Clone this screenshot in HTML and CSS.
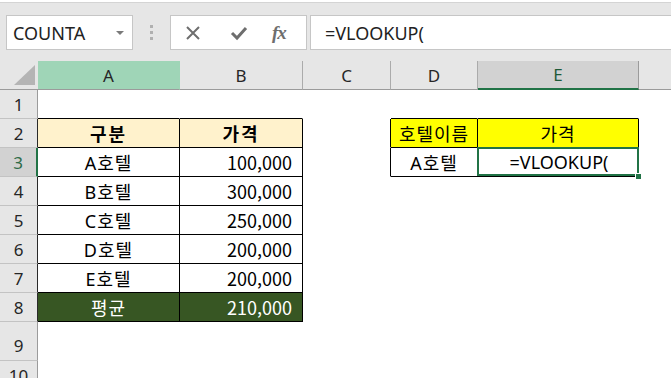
FILE: index.html
```html
<!DOCTYPE html>
<html lang="ko">
<head>
<meta charset="utf-8">
<link rel="stylesheet" href="styles.css">
</head>
<body>
<div class="app">
  <div class="toolbar">
    <div class="namebox">
      <span class="name">COUNTA</span>
      <svg class="caret" width="8" height="4" viewBox="0 0 8 4"><path d="M0 0H8L4 4Z" fill="#7a7a7a"/></svg>
    </div>
    <div class="dots"><i></i><i></i><i></i></div>
    <div class="btns">
      <svg class="ico" width="16" height="16" viewBox="0 0 16 16"><path d="M2 2L14 14M14 2L2 14" stroke="#6e6e6e" stroke-width="2" fill="none"/></svg>
      <svg class="ico" width="18" height="16" viewBox="0 0 18 16"><path d="M2 8L7 13L16 3" stroke="#6e6e6e" stroke-width="3" fill="none"/></svg>
      <span class="fx">fx</span>
    </div>
    <div class="formula">=VLOOKUP(</div>
  </div>

  <div class="sheet">
    <div class="corner"><span class="tri"></span></div>
    <div class="ch cha">A</div>
    <div class="ch">B</div>
    <div class="ch">C</div>
    <div class="ch">D</div>
    <div class="ch che">E</div>
    <div class="ch chf"></div>

    <div class="rh">1</div>
    <div class="c bb"></div><div class="c bb"></div><div class="c"></div><div class="c bb"></div><div class="c bb"></div><div class="c"></div>

    <div class="rh rt">2</div>
    <div class="c t hd bold">구분</div><div class="c t hd bold">가격</div><div class="c br"></div><div class="c t yl">호텔이름</div><div class="c t yl">가격</div><div class="c"></div>

    <div class="rh rsel">3</div>
    <div class="c t">A호텔</div><div class="c t num">100,000</div><div class="c br"></div><div class="c t">A호텔</div><div class="c t sel">=VLOOKUP(<span class="selbox"></span><span class="handle"></span></div><div class="c"></div>

    <div class="rh rt">4</div>
    <div class="c t">B호텔</div><div class="c t num">300,000</div><div class="c"></div><div class="c"></div><div class="c"></div><div class="c"></div>

    <div class="rh rt">5</div>
    <div class="c t">C호텔</div><div class="c t num">250,000</div><div class="c"></div><div class="c"></div><div class="c"></div><div class="c"></div>

    <div class="rh rt">6</div>
    <div class="c t">D호텔</div><div class="c t num">200,000</div><div class="c"></div><div class="c"></div><div class="c"></div><div class="c"></div>

    <div class="rh rt">7</div>
    <div class="c t">E호텔</div><div class="c t num">200,000</div><div class="c"></div><div class="c"></div><div class="c"></div><div class="c"></div>

    <div class="rh rt">8</div>
    <div class="c t dk">평균</div><div class="c t dk num">210,000</div><div class="c"></div><div class="c"></div><div class="c"></div><div class="c"></div>

    <div class="rh r9">9</div>
    <div class="c"></div><div class="c"></div><div class="c"></div><div class="c"></div><div class="c"></div><div class="c"></div>

    <div class="rh">10</div>
    <div class="c"></div><div class="c"></div><div class="c"></div><div class="c"></div><div class="c"></div><div class="c"></div>
  </div>
</div>
</body>
</html>
```

FILE: styles.css
```css
* { box-sizing: border-box; }
html, body { margin: 0; padding: 0; }
body {
  width: 671px;
  height: 378px;
  overflow: hidden;
  background: #ffffff;
  font-family: "Noto Sans", "Liberation Sans", sans-serif;
}
.app { width: 671px; height: 378px; overflow: hidden; }

.toolbar {
  height: 62px;
  background: #e6e6e6;
  border-top: 1px solid #d4d4d4;
  margin-top: 2px;
  display: flex;
  align-items: flex-start;
  padding: 12px 0 0 6px;
  margin-bottom: -3px;
}
.namebox {
  width: 127px;
  height: 35px;
  background: #fff;
  border: 1px solid #c6c6c6;
  display: flex;
  align-items: center;
  padding-left: 6px;
  padding-right: 8px;
  justify-content: space-between;
}
.name { font-size: 18px; color: #222; }
.caret { margin-top: 1px; }
.dots {
  margin-left: 17px;
  width: 3px;
  height: 35px;
  display: flex;
  flex-direction: column;
  justify-content: center;
  gap: 3px;
}
.dots i { display: block; width: 3px; height: 3px; background: #b0b0b0; }
.btns {
  margin-left: 17px;
  width: 137px;
  height: 35px;
  background: #fff;
  border: 1px solid #c6c6c6;
  display: flex;
  align-items: center;
  padding-left: 14px;
}
.btns .ico:first-child { margin-right: 29px; }
.btns .ico:nth-child(2) { margin-right: 24px; }
.fx {
  font-family: "Liberation Serif", "DejaVu Serif", serif;
  font-style: italic;
  font-weight: 700;
  font-size: 19px;
  color: #6e6e6e;
  letter-spacing: -1px;
}
.formula {
  margin-left: 3px;
  flex: 1;
  height: 35px;
  background: #fff;
  border: 1px solid #c6c6c6;
  border-right: none;
  display: flex;
  align-items: center;
  padding-left: 14px;
  font-size: 18px;
  color: #222;
}

.sheet {
  display: grid;
  grid-template-columns: 38px 142px 123px 88px 87px 161px 1fr;
  grid-template-rows: repeat(9, 29px) 39px 29px;
  font-family: "Noto Sans", "Noto Sans CJK KR", sans-serif;
}
.corner {
  background: #e6e6e6;
  border-bottom: 1px solid #9b9b9b;
  position: relative;
}
.tri {
  position: absolute;
  right: 3px;
  bottom: 4px;
  width: 0; height: 0;
  border-left: 21px solid transparent;
  border-bottom: 20px solid #b4b4b4;
}
.ch {
  background: #e6e6e6;
  border-bottom: 1px solid #9b9b9b;
  border-right: 1px solid #ababab;
  display: flex;
  align-items: center;
  justify-content: center;
  font-size: 17px;
  color: #262626;
}
.cha { background: #9fd5b7; border-right-color: #9fd5b7; }
.che { background: #d2d2d2; border-bottom: 2px solid #217346; color: #1e5a38; border-right-color: #9b9b9b; }
.chf { border-right: none; }

.rh {
  background: #e6e6e6;
  border-right: 1px solid #9b9b9b;
  border-bottom: 1px solid #c3c3c3;
  display: flex;
  align-items: center;
  justify-content: center;
  font-size: 17px;
  color: #262626;
}
.rt { border-right-color: #2a2a2a; }
.rsel { background: #d2d2d2; border-right: 2px solid #217346; color: #2e6b48; }
.r9 { padding-top: 8px; }

.c {
  border-right: 1px solid transparent;
  border-bottom: 1px solid transparent;
  display: flex;
  align-items: center;
  justify-content: center;
  font-size: 18px;
  letter-spacing: 1px;
  color: #000;
  position: relative;
}
.bb { border-bottom-color: #000; }
.br { border-right-color: #000; }
.t { border-right-color: #000; border-bottom-color: #000; }
.num {
  justify-content: flex-end;
  padding-right: 10px;
  letter-spacing: 0;
  font-family: "Noto Sans CJK KR", sans-serif;
}
.hd { background: #fff2cc; }
.bold { font-weight: 700; letter-spacing: 2px; }
.yl { background: #ffff00; }
.dk { background: #375623; color: #fff; }
.sel { padding-left: 2px; letter-spacing: 0; }
.selbox {
  position: absolute;
  left: -1px; top: -1px; right: -1px; bottom: 0;
  border: 2px solid #217346;
}
.handle {
  position: absolute;
  right: -3px; bottom: -3px;
  width: 5px; height: 5px;
  background: #217346;
  outline: 1px solid #fff;
}
```
